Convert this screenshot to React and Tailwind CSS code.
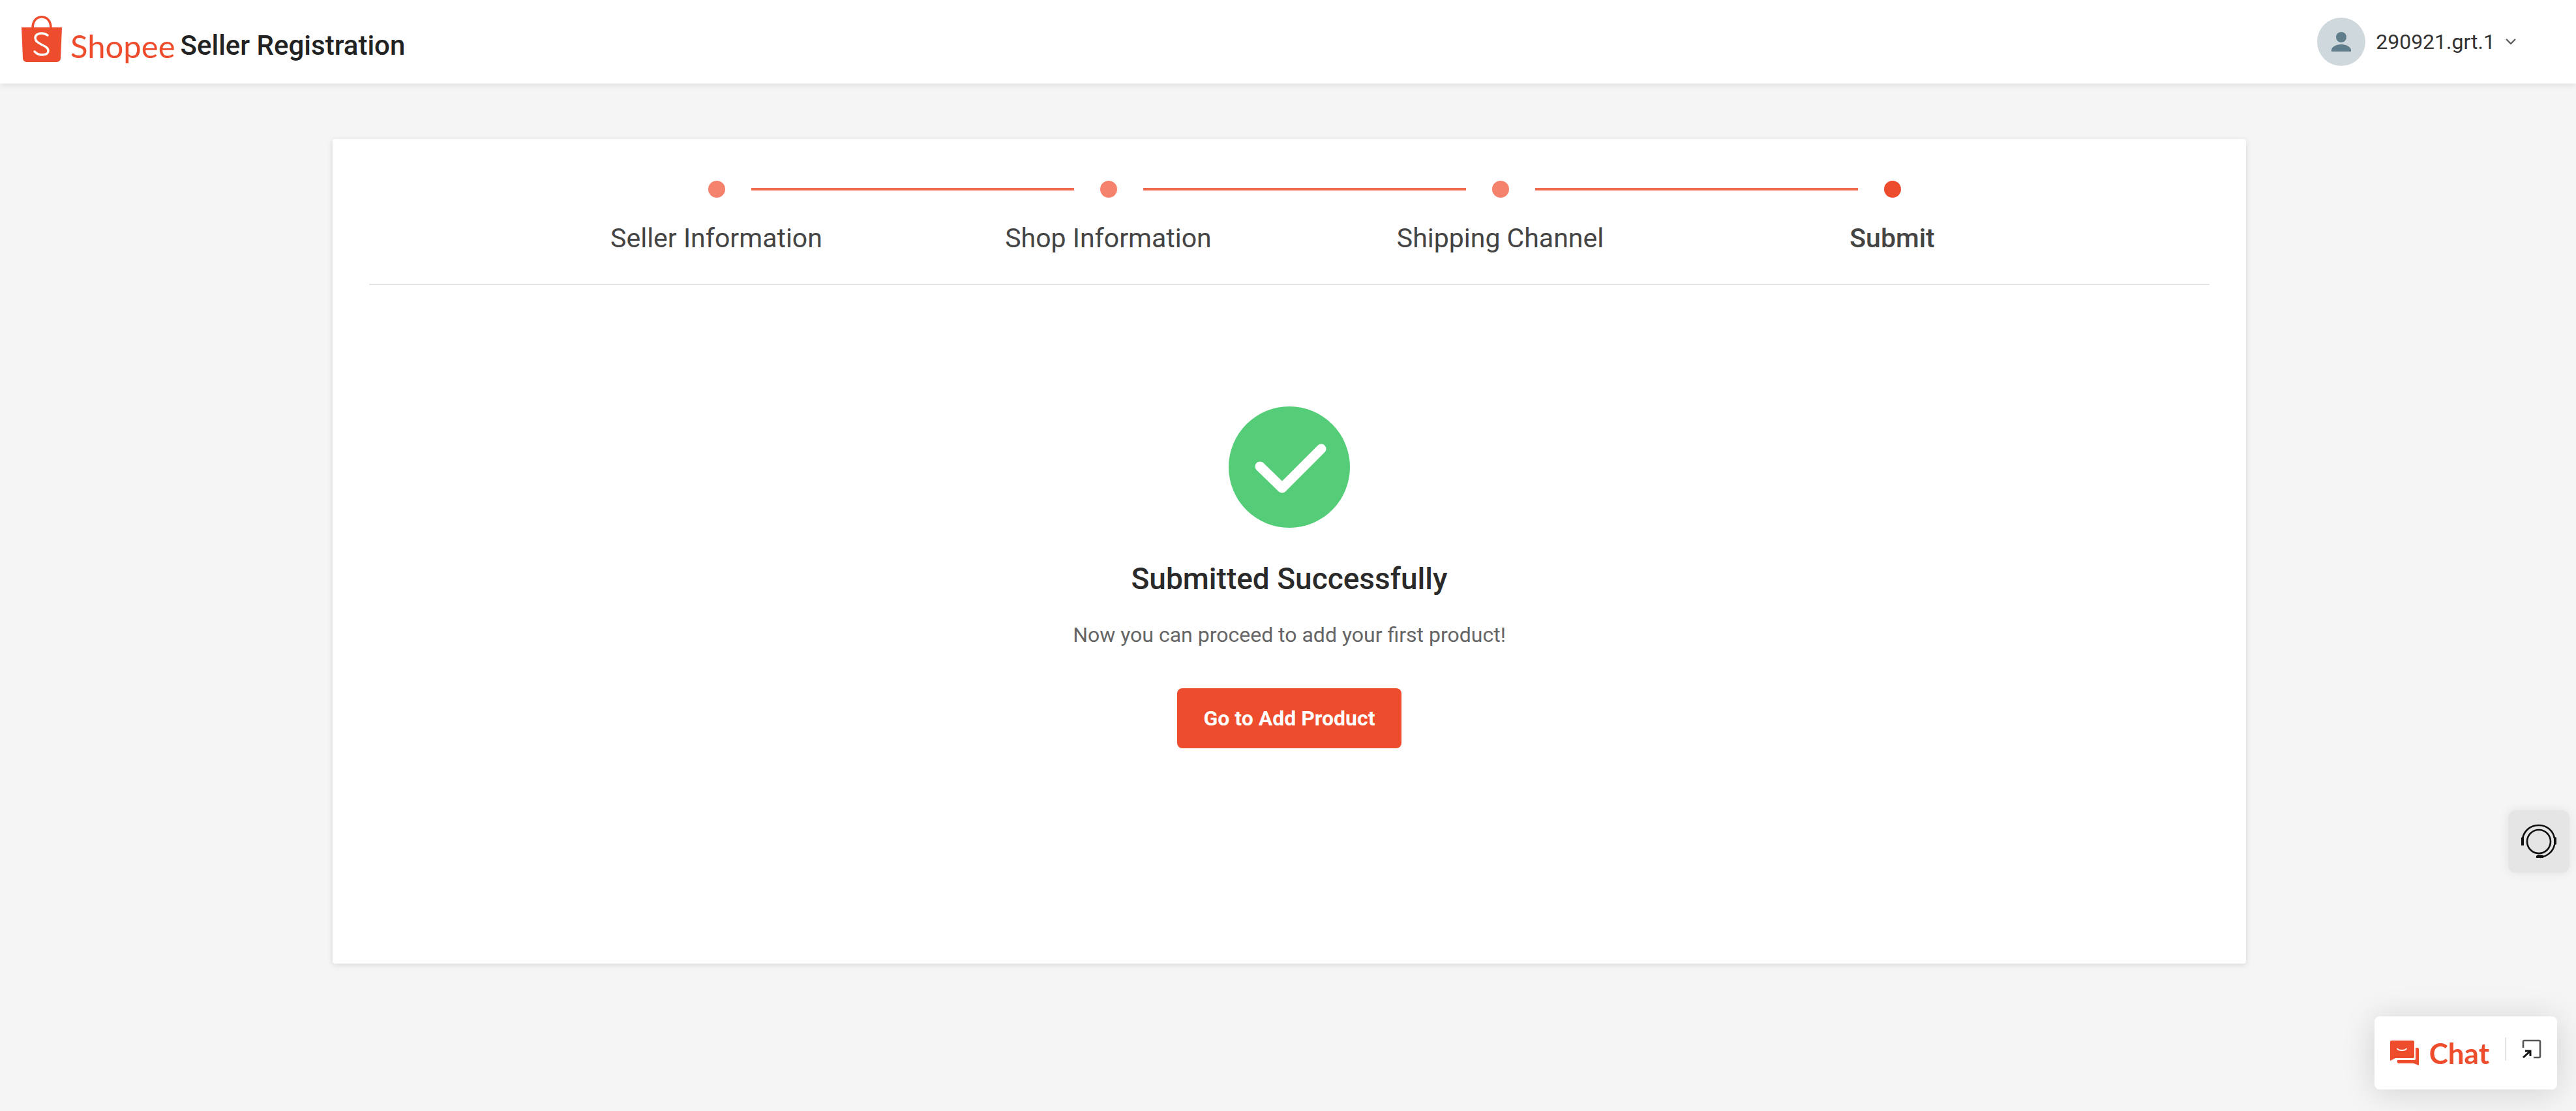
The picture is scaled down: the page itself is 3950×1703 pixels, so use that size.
import React from "react";

const steps = [
  { label: "Seller Information", active: false },
  { label: "Shop Information", active: false },
  { label: "Shipping Channel", active: false },
  { label: "Submit", active: true },
];

const ShopeeBag = () => (
  <svg viewBox="0 0 64 72" className="h-[72px] w-16" fill="none" aria-hidden="true">
    <path d="M18 19C18 8 24 2 32 2s14 6 14 17" stroke="#ee4d2d" strokeWidth="3.6" />
    <path d="M1 18h62l-2 47c0 4-3 6-7 6H10c-4 0-7-2-7-6z" fill="#ee4d2d" />
    <path
      d="M41 30c-3-2-5-3-9-3-6 0-10 3-10 7 0 5 4 7 9 10 6 3 11 5 11 10 0 4-4 6-10 6-5 0-8-2-11-5"
      stroke="#fff"
      strokeWidth="3.4"
      strokeLinecap="round"
    />
  </svg>
);

const Header = () => (
  <header className="relative flex h-32 items-center justify-between bg-white pr-[92px] pl-8 shadow-[0_2px_10px_rgba(0,0,0,0.1)]">
    <a href="#home" className="flex items-center pb-2">
      <ShopeeBag />
      <span className="ml-3 pt-5 font-['Lato',sans-serif] text-[49px] leading-[60px] text-[#ee4d2d]">Shopee</span>
      <span className="ml-2 pt-5 text-[42px] leading-[60px] font-medium text-[#222]">Seller Registration</span>
    </a>
    <button type="button" className="flex items-center">
      <svg viewBox="0 0 74 74" className="h-[74px] w-[74px]" aria-hidden="true">
        <circle cx="37" cy="37" r="37" fill="#cfd8dc" />
        <circle cx="37" cy="30" r="8" fill="#607d8b" />
        <path d="M22 52v-2c0-5 7-9 15-9s15 4 15 9v2z" fill="#607d8b" />
      </svg>
      <span className="ml-4 text-[32px] leading-[44px] text-[#333]">290921.grt.1</span>
      <svg viewBox="0 0 16 10" className="ml-4 h-[10px] w-4" fill="none" aria-hidden="true">
        <path d="M1 1l7 7 7-7" stroke="#555" strokeWidth="2.2" />
      </svg>
    </button>
  </header>
);

const Stepper = () => (
  <ol className="flex border-b-2 border-[#e5e5e5] pr-[186px] pb-11 pl-[232px]">
    {steps.map((step, i) => (
      <li key={step.label} className="flex flex-1 flex-col items-center">
        <div className="flex w-full items-center">
          <span className="w-0 flex-1" />
          <span className={`h-[26px] w-[26px] rounded-full ${step.active ? "bg-[#ee4d2d]" : "bg-[#f5826c]"}`} />
          {/* connector runs on into the next step's half */}
          <span className="w-0 flex-1">
            {i < steps.length - 1 && <span className="ml-10 block h-1 w-[calc(200%-80px)] bg-[#f1694e]" />}
          </span>
        </div>
        <span
          className={`mt-9 text-[41px] leading-[52px] whitespace-nowrap text-[#444] ${step.active ? "font-medium" : ""}`}
        >
          {step.label}
        </span>
      </li>
    ))}
  </ol>
);

const Result = () => (
  <section className="flex flex-col items-center pt-[186px]">
    <svg viewBox="0 0 186 186" className="h-[186px] w-[186px]" fill="none" aria-hidden="true">
      <circle cx="93" cy="93" r="93" fill="#55cd78" />
      <path d="M48 92l34 33 60-60" stroke="#fff" strokeWidth="15" strokeLinecap="round" strokeLinejoin="round" />
    </svg>
    <h1 className="mt-12 text-[46px] leading-[60px] font-medium text-[#2a2a2a]">Submitted Successfully</h1>
    <p className="mt-[34px] text-[32px] leading-[44px] text-[#666]">Now you can proceed to add your first product!</p>
    <button
      type="button"
      className="mt-[60px] h-[92px] rounded-lg bg-[#ee4d2d] px-10 text-[32px] font-bold text-white"
    >
      Go to Add Product
    </button>
  </section>
);

const SupportButton = () => (
  <button
    type="button"
    aria-label="Customer support"
    className="fixed right-[10px] bottom-[365px] flex h-24 w-[94px] items-center justify-center rounded-xl bg-[#e5e5e5] shadow-[0_0_16px_rgba(0,0,0,0.08)]"
  >
    <svg viewBox="0 0 56 54" className="h-[54px] w-14" fill="none" stroke="#111" aria-hidden="true">
      <circle cx="28" cy="27" r="18" strokeWidth="2.6" />
      <path d="M3 22C6 9 16 2 28 2s22 8 24 20M52 32c-2 10-11 18-22 19" strokeWidth="2.6" />
      <path d="M1 21l4-2v14H1zM51 19l4 2v10l-4 2zM24 49l3-2 8 1v4H24z" fill="#111" stroke="none" />
    </svg>
  </button>
);

const ChatWidget = () => (
  <div className="fixed right-[29px] bottom-[33px] flex h-28 items-center rounded-lg bg-white px-6 shadow-[0_4px_50px_rgba(0,0,0,0.15)]">
    <button type="button" className="flex items-center">
      <svg viewBox="0 0 44 38" className="h-[38px] w-11" fill="none" aria-hidden="true">
        <path d="M2 0h33a2 2 0 012 2v23a2 2 0 01-2 2H8l-8 4V2a2 2 0 012-2z" fill="#ee4d2d" />
        <path d="M39 11h3a2 2 0 012 2v25l-8-3H13a2 2 0 01-2-2v-3h26a2 2 0 002-2z" fill="#ee4d2d" />
        <path d="M11 12c1 4 13 4 14 0" stroke="#fff" strokeWidth="2" />
      </svg>
      <span className="ml-4 font-['Lato',sans-serif] text-[44px] leading-[52px] font-bold text-[#ee4d2d]">
        Chat
      </span>
    </button>
    <div className="flex items-center pb-3">
      <span className="ml-6 h-9 w-0.5 bg-[#e5e5e5]" />
      <button type="button" aria-label="Expand chat" className="ml-6">
        <svg viewBox="0 0 30 30" className="h-[30px] w-[30px]" fill="none" stroke="#555" strokeWidth="2.6" aria-hidden="true">
          <path d="M2 13V4a2 2 0 012-2h22a2 2 0 012 2v22a2 2 0 01-2 2h-8" />
          <path d="M2 28l10-9M5 18h8v8" stroke="#111" strokeWidth="3" />
        </svg>
      </button>
    </div>
  </div>
);

const App = () => {
  return (
    <div className="min-h-screen bg-[#f5f5f5] font-['Roboto',sans-serif]">
      <Header />
      <main className="pt-[85px] pr-[506px] pb-16 pl-[510px]">
        <div className="rounded-sm bg-white px-14 pt-16 pb-[330px] shadow-[0_2px_10px_rgba(0,0,0,0.12)]">
          <Stepper />
          <Result />
        </div>
      </main>
      <SupportButton />
      <ChatWidget />
    </div>
  );
};

export default App;
